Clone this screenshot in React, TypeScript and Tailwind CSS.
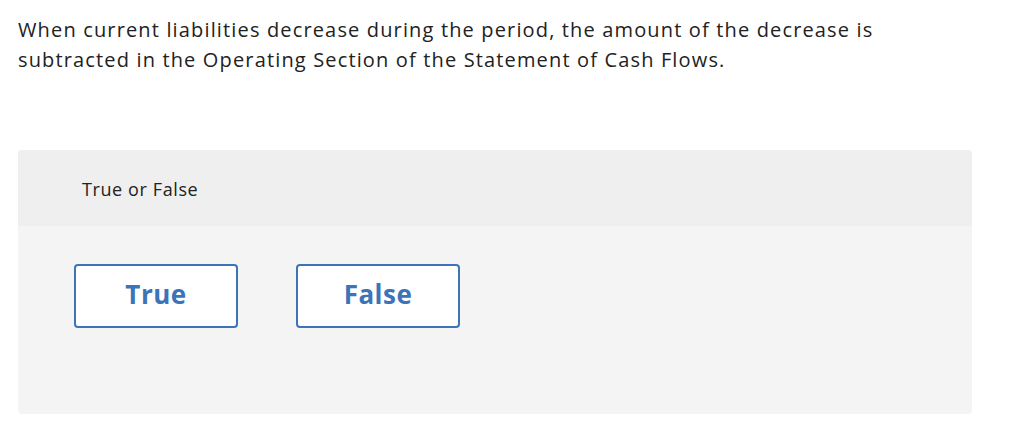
import React, { useState } from "react";

const options = ["True", "False"];

export default function App() {
  const [selected, setSelected] = useState<string | null>(null);

  return (
    <main className="min-h-screen bg-white px-[18px] pt-[15px] font-['Open_Sans','Lato',sans-serif] text-[#222]">
      <p className="text-[20px] leading-[30px] tracking-[1.15px]">
        When current liabilities decrease during the period, the amount of the decrease is
        <br />
        subtracted in the Operating Section of the Statement of Cash Flows.
      </p>

      <section className="mt-[75px] w-[954px] overflow-hidden rounded-[4px] bg-[#f4f4f4]">
        <header className="flex h-[76px] items-center bg-[#efefef] px-[64px] pt-[2px] text-[18px] tracking-[0.6px]">
          True or False
        </header>
        <div className="flex gap-[58px] px-[56px] pt-[38px] pb-[86px]">
          {options.map((opt) => (
            <button
              key={opt}
              onClick={() => setSelected(opt)}
              className={`h-[64px] w-[164px] rounded-[4px] border-2 border-[#3b74b8] pb-[3px] text-[26px] font-bold tracking-[0.5px] ${
                selected === opt ? "bg-[#3b74b8] text-white" : "bg-white text-[#3b74b8]"
              }`}
            >
              {opt}
            </button>
          ))}
        </div>
      </section>
    </main>
  );
}
